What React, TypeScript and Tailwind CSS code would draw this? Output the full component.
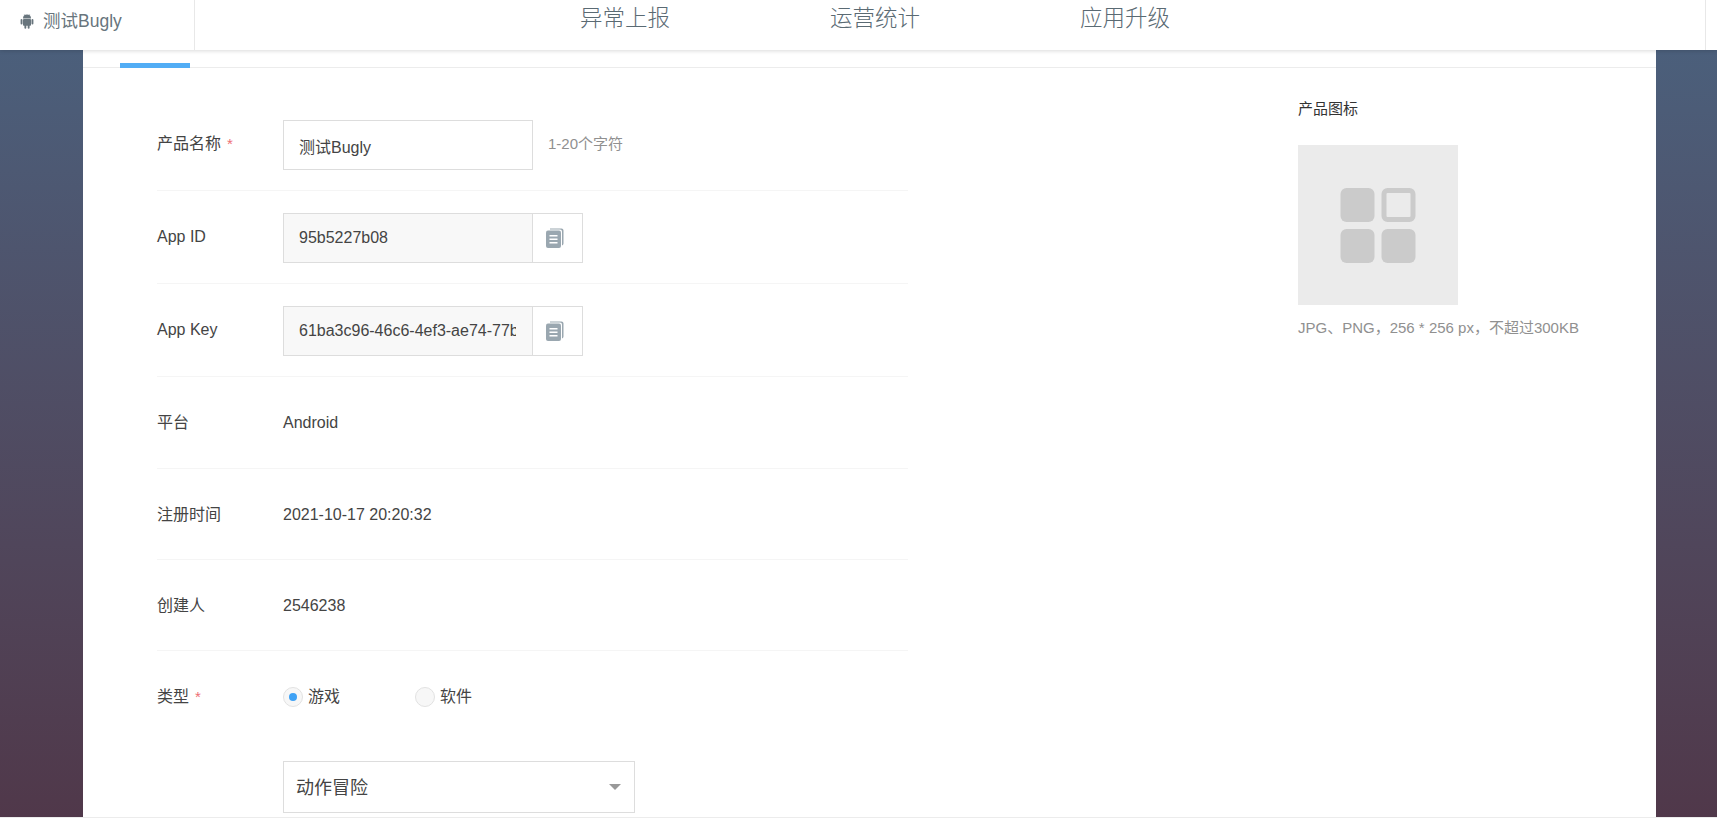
import type { ReactNode } from 'react';

const fontStack = "font-['Liberation_Sans','Noto_Sans_CJK_SC',sans-serif]";

const navItems = ['异常上报', '运营统计', '应用升级'];

const AndroidIcon = () => (
  <svg width="14" height="15" viewBox="0 0 14 15" fill="#68757d">
    <path d="M3 4.6a4 4 0 0 1 8 0z" />
    <path d="M4.3 0.4 5.4 2M9.7 0.4 8.6 2" stroke="#68757d" strokeWidth="0.6" />
    <rect x="3" y="5.1" width="8" height="6.6" rx="0.8" />
    <rect x="0.6" y="5.1" width="1.9" height="5.4" rx="0.95" />
    <rect x="11.5" y="5.1" width="1.9" height="5.4" rx="0.95" />
    <rect x="4.4" y="10.5" width="1.9" height="4.3" rx="0.95" />
    <rect x="7.7" y="10.5" width="1.9" height="4.3" rx="0.95" />
  </svg>
);

const CopyIcon = () => (
  <svg width="18" height="20" viewBox="0 0 18 20" fill="none">
    <path d="M4 0.5h11.5a2 2 0 0 1 2 2v13a2 2 0 0 1-1.5 1.9V3.5a2 2 0 0 0-2-2H4z" fill="#9aa7b0" />
    <rect x="0" y="2.5" width="15" height="17.5" rx="2" fill="#9aa7b0" />
    <rect x="3.5" y="7" width="8" height="1.5" fill="#fff" />
    <rect x="3.5" y="10.5" width="8" height="1.5" fill="#fff" />
    <rect x="3.5" y="14" width="8" height="1.5" fill="#fff" />
  </svg>
);

const Star = () => <span className="ml-[6px] text-[15px] text-[#ee6e73]">*</span>;

const Row = ({ label, height, children }: { label: string; height: string; children: ReactNode }) => (
  <div className={`flex items-center border-b border-[#f5f5f5] ${height}`}>
    <div className="w-[126px] shrink-0 text-[16px] text-[#444]">{label}</div>
    {children}
  </div>
);

const CopyField = ({ value }: { value: string }) => (
  <div className="mt-[2px] flex h-[50px] w-[300px] border border-[#ddd]">
    <input
      readOnly
      value={value}
      className="w-[249px] shrink-0 border-r border-[#ddd] bg-[#f8f8f8] pl-[15px] pr-[16px] text-[16px] text-[#444] outline-none"
    />
    <div className="flex flex-1 items-center justify-center pr-[6px]">
      <CopyIcon />
    </div>
  </div>
);

const Radio = ({ label, checked }: { label: string; checked?: boolean }) => (
  <div className="flex items-center gap-[5px]">
    <span className="flex h-[20px] w-[20px] items-center justify-center rounded-full border border-[#e2e2e2] bg-[#f7f7f7]">
      {checked && <span className="h-[8px] w-[8px] rounded-full bg-[#3fa2f5]" />}
    </span>
    <span className="text-[16px] text-[#444]">{label}</span>
  </div>
);

const App = () => {
  return (
    <div className={`flex h-[819px] flex-col overflow-hidden bg-white ${fontStack}`}>
      {/* top bar */}
      <header className="relative z-10 flex h-[50px] shrink-0 bg-white pr-[11px] shadow-[0_1px_4px_rgba(0,0,0,0.15)]">
        <div className="flex w-[195px] shrink-0 items-center gap-[9px] border-r border-[#e8e8e8] pb-[8px] pl-[20px]">
          <AndroidIcon />
          <span className="text-[17.5px] text-[#68757d]">测试Bugly</span>
        </div>
        <nav className="flex flex-1 gap-[160px] pb-[6px] pl-[385px]">
          {navItems.map((item) => (
            <a key={item} className="text-[22.5px] leading-[38px] font-light text-[#5a6a73]">
              {item}
            </a>
          ))}
        </nav>
        <div className="w-px bg-[#e8e8e8]" />
      </header>

      <div className="flex min-h-0 flex-1 justify-center bg-gradient-to-b from-[#4b5f7b] to-[#50384a] pr-[1px]">
        <main className="ml-[23px] h-full w-[1573px] overflow-hidden bg-white">
          {/* tab strip */}
          <div className="h-[18px] border-b border-[#ececec] pl-[37px] pt-[13px]">
            <div className="h-[5px] w-[70px] bg-[#52adf5]" />
          </div>

          <div className="flex">
            <section className="ml-[74px] w-[751px] pt-[52px]">
              <div className="flex h-[71px] items-start border-b border-[#f5f5f5]">
                <div className="mt-[12px] w-[126px] shrink-0 text-[16px] leading-[24px] text-[#444]">
                  产品名称
                  <Star />
                </div>
                <input
                  readOnly
                  value="测试Bugly"
                  className="h-[50px] w-[250px] border border-[#ddd] px-[15px] pt-[1px] text-[16px] text-[#444] outline-none"
                />
                <span className="ml-[15px] mt-[12px] text-[15px] leading-[24px] text-[#909090]">1-20个字符</span>
              </div>
              <Row label="App ID" height="h-[93px]">
                <CopyField value="95b5227b08" />
              </Row>
              <Row label="App Key" height="h-[93px]">
                <CopyField value="61ba3c96-46c6-4ef3-ae74-77bd1f0a52c8" />
              </Row>
              <Row label="平台" height="h-[92px]">
                <span className="text-[16px] text-[#444]">Android</span>
              </Row>
              <Row label="注册时间" height="h-[91px] pt-[2px]">
                <span className="text-[16px] text-[#444]">2021-10-17 20:20:32</span>
              </Row>
              <Row label="创建人" height="h-[91px] pt-[2px]">
                <span className="text-[16px] text-[#444]">2546238</span>
              </Row>
              <div className="flex h-[92px] items-center">
                <div className="w-[126px] shrink-0 text-[16px] text-[#444]">
                  类型
                  <Star />
                </div>
                <div className="flex gap-[75px]">
                  <Radio label="游戏" checked />
                  <Radio label="软件" />
                </div>
              </div>
              <div className="ml-[126px] mt-[18px] flex h-[52px] w-[352px] items-center justify-between border border-[#ddd] pl-[12px] pr-[13px]">
                <span className="pt-[2px] text-[18px] text-[#444]">动作冒险</span>
                <span className="h-0 w-0 border-x-[6px] border-t-[6px] border-x-transparent border-t-[#999]" />
              </div>
            </section>

            <aside className="ml-[390px] pt-[30px]">
              <div className="text-[15px] leading-[22px] text-[#333]">产品图标</div>
              <div className="mt-[25px] flex h-[160px] w-[160px] items-center justify-center bg-[#ebebeb]">
                <div className="grid -translate-x-[0.5px] grid-cols-2 gap-[7px]">
                  <div className="h-[34px] w-[34px] rounded-[6px] bg-[#cbcbcb]" />
                  <div className="h-[34px] w-[34px] rounded-[6px] border-[5px] border-[#cbcbcb]" />
                  <div className="h-[34px] w-[34px] rounded-[6px] bg-[#cbcbcb]" />
                  <div className="h-[34px] w-[34px] rounded-[6px] bg-[#cbcbcb]" />
                </div>
              </div>
              <p className="mt-[12px] text-[15px] leading-[22px] whitespace-nowrap text-[#909090]">
                JPG、PNG，256 * 256 px，不超过300KB
              </p>
            </aside>
          </div>
        </main>
      </div>

      <div className="h-[2px] shrink-0 border-t border-[#ececec] bg-white" />
    </div>
  );
};

export default App;
